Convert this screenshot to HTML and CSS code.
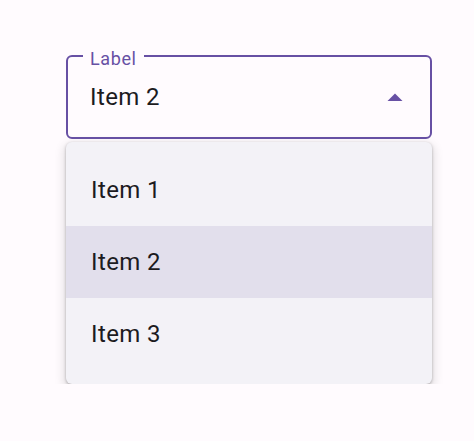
FILE: index.html
```html
<!DOCTYPE html>
<html lang="en">
<head>
<meta charset="utf-8">
<title>Dropdown</title>
<link rel="stylesheet" href="styles.css">
</head>
<body>
<div class="wrap">
  <div class="field">
    <span class="label">Label</span>
    <span class="value">Item 2</span>
    <svg class="arrow" width="16" height="8" viewBox="0 0 16 8" aria-hidden="true"><path d="M0.5 8 L8 0.5 L15.5 8 Z" fill="#6750a4"/></svg>
  </div>
  <ul class="menu">
    <li class="item">Item 1</li>
    <li class="item selected">Item 2</li>
    <li class="item">Item 3</li>
  </ul>
</div>
</body>
</html>
```
FILE: styles.css
```css
html, body {
  margin: 0;
  padding: 0;
  background: #fffbfe;
  font-family: Roboto, "Noto Sans", sans-serif;
  color: #1c1b1f;
}
.wrap {
  width: 366px;
  margin: 55px 0 0 66px;
}
.field {
  position: relative;
  box-sizing: border-box;
  height: 84px;
  border: 2px solid #6750a4;
  border-radius: 6px;
  display: flex;
  align-items: center;
  padding: 0 27px 0 22px;
}
.label {
  position: absolute;
  left: 15px;
  top: -7px;
  padding: 0 7px;
  background: #fffbfe;
  color: #6750a4;
  font-size: 18px;
  line-height: 18px;
  letter-spacing: 0.6px;
}
.value {
  flex: 1;
  font-size: 24px;
  line-height: 32px;
  letter-spacing: 0.4px;
}
.arrow {
  display: block;
}
.menu {
  list-style: none;
  margin: 3px 0 0;
  padding: 12px 0 14px;
  background: #f3f2f7;
  border-radius: 6px;
  box-shadow: 0 1px 3px rgba(0,0,0,0.28), 0 4px 10px 3px rgba(0,0,0,0.1);
}
.item {
  height: 72px;
  display: flex;
  align-items: center;
  padding: 0 24px 0 25px;
  font-size: 24px;
  letter-spacing: 0.4px;
}
.selected {
  background: #e2dfec;
}
```
